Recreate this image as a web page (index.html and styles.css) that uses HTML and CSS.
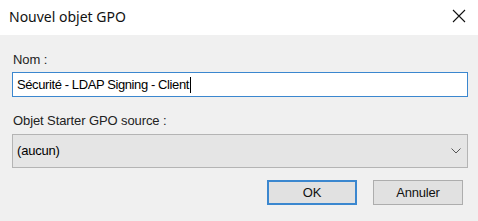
FILE: index.html
```html
<!DOCTYPE html>
<html lang="fr">
<head>
  <meta charset="UTF-8" />
  <title>Nouvel objet GPO</title>
  <link rel="stylesheet" href="styles.css">
</head>
<body>

<div class="dialog">
  <div class="titlebar">
    <span class="title">Nouvel objet GPO</span>
    <span class="close" title="Fermer">
      <svg width="14" height="14" viewBox="0 0 14 14"><path d="M1 1 L13 13 M13 1 L1 13" stroke="#111" stroke-width="1.1" fill="none"/></svg>
    </span>
  </div>

  <div class="content">
    <label class="lbl" for="nom">Nom :</label>
    <div class="textbox" id="nom">Sécurité - LDAP Signing - Client<span class="caret"></span></div>

    <label class="lbl lbl-source">Objet Starter GPO source :</label>
    <div class="combo">
      <span>(aucun)</span>
      <svg width="10" height="6" viewBox="0 0 10 6"><path d="M0.5 0.5 L5 5 L9.5 0.5" stroke="#555" stroke-width="1" fill="none"/></svg>
    </div>

    <div class="btns">
      <button class="btn btn-ok">OK</button>
      <button class="btn">Annuler</button>
    </div>
  </div>
</div>

</body>
</html>
```

FILE: styles.css
```css
* { box-sizing: border-box; margin: 0; padding: 0; }
body {
  font-family: 'Liberation Sans', Arial, sans-serif;
  font-size: 13px;
  color: #000;
  background: #f0f0f0;
  width: 478px;
  height: 221px;
  overflow: hidden;
}
.dialog {
  display: flex;
  flex-direction: column;
  height: 221px;
}
.titlebar {
  background: #fff;
  height: 35px;
  display: flex;
  align-items: center;
  justify-content: space-between;
  padding: 0 10px 0 9px;
}
.title {
  font-family: 'Noto Sans', 'Open Sans', sans-serif;
  font-size: 14px;
  color: #111;
  margin-top: -2px;
}
.close {
  display: flex;
  width: 16px;
  height: 16px;
  align-items: center;
  justify-content: center;
  margin-right: 1px;
  margin-top: -3px;
}
.content {
  flex: 1;
  background: #f0f0f0;
  padding: 17px 10px 0 12px;
  display: flex;
  flex-direction: column;
}
.lbl {
  display: block;
  color: #222;
  line-height: 15px;
  padding-left: 1px;
  letter-spacing: -0.1px;
}
.textbox {
  margin-top: 5px;
  height: 25px;
  border: 1px solid #3b87cf;
  background: #fff;
  padding: 0 4px;
  display: flex;
  align-items: center;
  white-space: nowrap;
  letter-spacing: -0.4px;
}
.caret {
  display: inline-block;
  width: 1px;
  height: 16px;
  background: #000;
  margin-left: 1px;
}
.lbl-source {
  margin-top: 16px;
}
.combo {
  margin-top: 6px;
  height: 34px;
  border: 1px solid #b4b4b4;
  background: #e5e5e5;
  padding: 0 6px 0 4px;
  display: flex;
  align-items: center;
  justify-content: space-between;
  letter-spacing: -0.2px;
}
.combo span {
  margin-top: -2px;
}
.btns {
  margin-top: 12px;
  display: flex;
  justify-content: flex-end;
  gap: 16px;
  padding-right: 5px;
}
.btn {
  width: 90px;
  height: 25px;
  font-family: 'Liberation Sans', Arial, sans-serif;
  font-size: 13px;
  letter-spacing: -0.2px;
  color: #111;
  background: #e1e1e1;
  border: 1px solid #adadad;
}
.btn-ok {
  border: 2px solid #3b87cf;
}
```
